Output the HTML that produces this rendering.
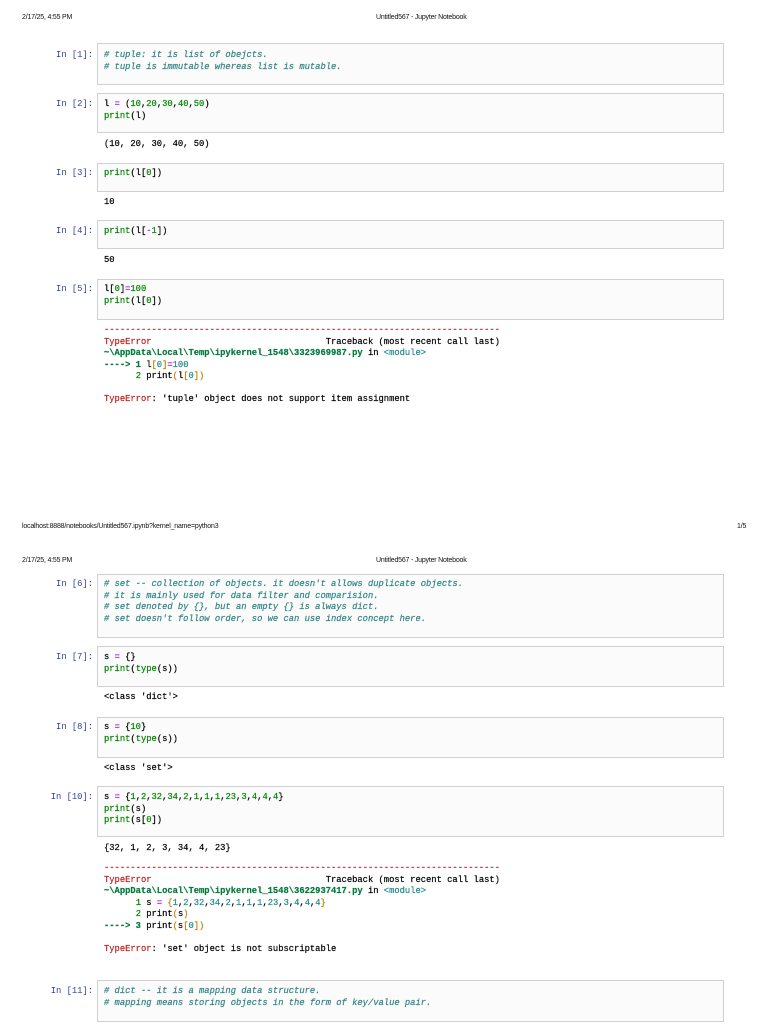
<!DOCTYPE html>
<html><head><meta charset="utf-8"><style>
body{margin:0;width:768px;height:1024px;background:#fff;position:relative;overflow:hidden;font-family:"Liberation Mono",monospace;}
.h{position:absolute;font-family:"Liberation Sans",sans-serif;font-size:7px;color:#111;letter-spacing:-0.2px}
.box{position:absolute;left:97px;width:625px;border:1px solid #d0d0d0;background:#fbfbfb}
.p{position:absolute;right:675px;font-size:8.8px;color:#303f9f;white-space:pre;line-height:11.5px;margin-top:2px}
.t{position:absolute;left:104px;font-size:8.8px;line-height:11.5px;white-space:pre;color:#000;margin-top:2px;-webkit-text-stroke:0.2px currentColor}
.c{color:#2f8585;font-style:italic}
.g{color:#008000}.n{color:#008800}.o{color:#aa22ff}
.r{color:#c02020}.gb{color:#007a3d;font-weight:bold}.cy{color:#208a8a}.y{color:#c08000}
</style></head><body>
<div class="h" style="left:22px;top:14px">2/17/25, 4:55 PM</div>
<div class="h" style="left:376px;top:14px">Untitled567 - Jupyter Notebook</div>

<div class="box" style="top:43px;height:40px"></div>
<div class="p" style="top:48px">In [1]:</div>
<div class="t c" style="top:48px"># tuple: it is list of obejcts.
# tuple is immutable whereas list is mutable.</div>

<div class="box" style="top:93px;height:38px"></div>
<div class="p" style="top:97px">In [2]:</div>
<div class="t" style="top:97px">l <span class="o">=</span> (<span class="n">10</span>,<span class="n">20</span>,<span class="n">30</span>,<span class="n">40</span>,<span class="n">50</span>)
<span class="g">print</span>(l)</div>
<div class="t" style="top:137px">(10, 20, 30, 40, 50)</div>

<div class="box" style="top:163px;height:27px"></div>
<div class="p" style="top:166px">In [3]:</div>
<div class="t" style="top:166px"><span class="g">print</span>(l[<span class="n">0</span>])</div>
<div class="t" style="top:195px">10</div>

<div class="box" style="top:220px;height:27px"></div>
<div class="p" style="top:224px">In [4]:</div>
<div class="t" style="top:224px"><span class="g">print</span>(l[<span class="o">-</span><span class="n">1</span>])</div>
<div class="t" style="top:253px">50</div>

<div class="box" style="top:279px;height:39px"></div>
<div class="p" style="top:282px">In [5]:</div>
<div class="t" style="top:282px">l[<span class="n">0</span>]<span class="o">=</span><span class="n">100</span>
<span class="g">print</span>(l[<span class="n">0</span>])</div>
<div class="t" style="top:323px"><span class="r">---------------------------------------------------------------------------</span>
<span class="r">TypeError</span>                                 Traceback (most recent call last)
<span class="gb">~\AppData\Local\Temp\ipykernel_1548\3323969987.py</span> in <span class="cy">&lt;module&gt;</span>
<span class="gb">----&gt; 1</span> l<span class="y">[</span><span class="cy">0</span><span class="y">]</span><span class="o">=</span><span class="cy">100</span>
      <span class="g">2</span> print<span class="y">(</span>l<span class="y">[</span><span class="cy">0</span><span class="y">])</span>

<span class="r">TypeError</span>: 'tuple' object does not support item assignment</div>

<div class="h" style="left:22px;top:523px">localhost:8888/notebooks/Untitled567.ipynb?kernel_name=python3</div>
<div class="h" style="left:737px;top:523px">1/5</div>

<div class="h" style="left:22px;top:557px">2/17/25, 4:55 PM</div>
<div class="h" style="left:376px;top:557px">Untitled567 - Jupyter Notebook</div>

<div class="box" style="top:574px;height:62px"></div>
<div class="p" style="top:577px">In [6]:</div>
<div class="t c" style="top:577px"># set -- collection of objects. it doesn't allows duplicate objects.
# it is mainly used for data filter and comparision.
# set denoted by {}, but an empty {} is always dict.
# set doesn't follow order, so we can use index concept here.</div>

<div class="box" style="top:646px;height:39px"></div>
<div class="p" style="top:650px">In [7]:</div>
<div class="t" style="top:650px">s <span class="o">=</span> {}
<span class="g">print</span>(<span class="g">type</span>(s))</div>
<div class="t" style="top:690px">&lt;class 'dict'&gt;</div>

<div class="box" style="top:717px;height:39px"></div>
<div class="p" style="top:720px">In [8]:</div>
<div class="t" style="top:720px">s <span class="o">=</span> {<span class="n">10</span>}
<span class="g">print</span>(<span class="g">type</span>(s))</div>
<div class="t" style="top:761px">&lt;class 'set'&gt;</div>

<div class="box" style="top:786px;height:49px"></div>
<div class="p" style="top:790px">In [10]:</div>
<div class="t" style="top:790px">s <span class="o">=</span> {<span class="n">1</span>,<span class="n">2</span>,<span class="n">32</span>,<span class="n">34</span>,<span class="n">2</span>,<span class="n">1</span>,<span class="n">1</span>,<span class="n">1</span>,<span class="n">23</span>,<span class="n">3</span>,<span class="n">4</span>,<span class="n">4</span>,<span class="n">4</span>}
<span class="g">print</span>(s)
<span class="g">print</span>(s[<span class="n">0</span>])</div>
<div class="t" style="top:841px">{32, 1, 2, 3, 34, 4, 23}</div>
<div class="t" style="top:861px"><span class="r">---------------------------------------------------------------------------</span>
<span class="r">TypeError</span>                                 Traceback (most recent call last)
<span class="gb">~\AppData\Local\Temp\ipykernel_1548\3622937417.py</span> in <span class="cy">&lt;module&gt;</span>
      <span class="g">1</span> s <span class="o">=</span> <span class="y">{</span><span class="cy">1</span>,<span class="cy">2</span>,<span class="cy">32</span>,<span class="cy">34</span>,<span class="cy">2</span>,<span class="cy">1</span>,<span class="cy">1</span>,<span class="cy">1</span>,<span class="cy">23</span>,<span class="cy">3</span>,<span class="cy">4</span>,<span class="cy">4</span>,<span class="cy">4</span><span class="y">}</span>
      <span class="g">2</span> print<span class="y">(</span>s<span class="y">)</span>
<span class="gb">----&gt; 3</span> print<span class="y">(</span>s<span class="y">[</span><span class="cy">0</span><span class="y">])</span>

<span class="r">TypeError</span>: 'set' object is not subscriptable</div>

<div class="box" style="top:980px;height:40px"></div>
<div class="p" style="top:984px">In [11]:</div>
<div class="t c" style="top:984px"># dict -- it is a mapping data structure.
# mapping means storing objects in the form of key/value pair.</div>
</body></html>
